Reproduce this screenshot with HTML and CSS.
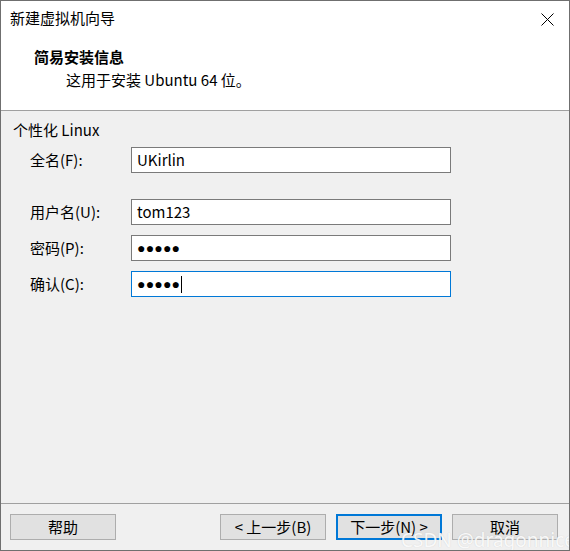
FILE: index.html
```html
<!DOCTYPE html>
<html lang="zh-CN">
<head>
<meta charset="utf-8">
<title>新建虚拟机向导</title>
<link rel="stylesheet" href="styles.css">
</head>
<body>
<div class="window">
  <div class="top">
    <div class="titlebar">
      <span class="title">新建虚拟机向导</span>
      <span class="close" aria-label="关闭">
        <svg width="13" height="13" viewBox="0 0 13 13"><path d="M0.5 0.5 L12.5 12.5 M12.5 0.5 L0.5 12.5" stroke="#000" stroke-width="1" fill="none"/></svg>
      </span>
    </div>
    <div class="header">
      <div class="header-title">简易安装信息</div>
      <div class="header-sub">这用于安装 Ubuntu 64 位。</div>
    </div>
  </div>
  <div class="body">
    <div class="group-label">个性化 Linux</div>
    <div class="row">
      <span class="label">全名(F):</span>
      <div class="field">UKirlin</div>
    </div>
    <div class="row row-spaced">
      <span class="label">用户名(U):</span>
      <div class="field">tom123</div>
    </div>
    <div class="row">
      <span class="label">密码(P):</span>
      <div class="field dots">●●●●●</div>
    </div>
    <div class="row">
      <span class="label">确认(C):</span>
      <div class="field dots focused">●●●●●<span class="caret"></span></div>
    </div>
  </div>
  <div class="footer">
    <button class="btn">帮助</button>
    <div class="btn-group">
      <button class="btn">&lt; 上一步(B)</button>
      <button class="btn default">下一步(N) &gt;</button>
      <button class="btn">取消</button>
    </div>
    <span class="watermark">CSDN @dragonnice</span>
  </div>
</div>
</body>
</html>
```
FILE: styles.css
```css
* { box-sizing: border-box; }
html, body { margin: 0; padding: 0; }
body {
  width: 570px;
  height: 551px;
  overflow: hidden;
  font-family: "Noto Sans CJK SC", "Noto Sans", sans-serif;
  font-size: 15px;
  color: #000;
  background: #f0f0f0;
}
.window {
  width: 570px;
  height: 551px;
  border: 1px solid #6f6f6f;
  display: flex;
  flex-direction: column;
  background: #f0f0f0;
  overflow: hidden;
}
.top {
  background: #fff;
  height: 110px;
  border-bottom: 1px solid #a0a0a0;
  flex: none;
}
.titlebar {
  height: 34px;
  display: flex;
  align-items: center;
  justify-content: space-between;
  padding: 0 15px 0 9px;
}
.title { line-height: 34px; }
.close { display: flex; width: 13px; height: 13px; margin-top: 2px; }
.header { padding-left: 33px; }
.header-title {
  font-weight: bold;
  line-height: 22px;
  margin-top: 11px;
}
.header-sub {
  line-height: 22px;
  margin-top: 1px;
  padding-left: 32px;
}
.body {
  flex: 1;
  padding: 9px 0 0 12px;
  display: flex;
  flex-direction: column;
}
.group-label { line-height: 20px; margin-bottom: 7px; }
.row {
  display: flex;
  align-items: center;
  height: 26px;
  margin-bottom: 10px;
  padding-left: 17px;
}
.row-spaced { margin-top: 16px; }
.label { width: 101px; flex: none; line-height: 20px; }
.field {
  width: 320px;
  height: 26px;
  border: 1px solid #7a7a7a;
  background: #fff;
  padding: 0 5px;
  line-height: 24px;
  display: flex;
  align-items: center;
}
.dots {
  font-family: "Liberation Sans", sans-serif;
  font-size: 14px;
  letter-spacing: 0.2px;
}
.focused { border-color: #0078d7; }
.caret {
  display: inline-block;
  width: 1px;
  height: 17px;
  background: #000;
  margin-left: 1px;
}
.footer {
  flex: none;
  height: 47px;
  border-top: 1px solid #a0a0a0;
  display: flex;
  justify-content: space-between;
  align-items: flex-start;
  padding: 10px 11px 0 9px;
  position: relative;
}
.btn-group { display: flex; gap: 10px; }
.btn {
  width: 106px;
  height: 26px;
  border: 1px solid #adadad;
  background: #e1e1e1;
  font-family: "Noto Sans CJK SC", "Noto Sans", sans-serif;
  font-size: 15px;
  color: #000;
  padding: 0;
  line-height: 22px;
}
.btn.default { border: 2px solid #0078d7; }
.watermark {
  position: absolute;
  right: -6px;
  bottom: -1px;
  font-family: "Noto Sans", sans-serif;
  font-size: 19px;
  line-height: 22px;
  white-space: nowrap;
  color: rgba(255,255,255,0.9);
  text-shadow: 0 0 1px rgba(160,160,160,0.45);
  pointer-events: none;
}
```
